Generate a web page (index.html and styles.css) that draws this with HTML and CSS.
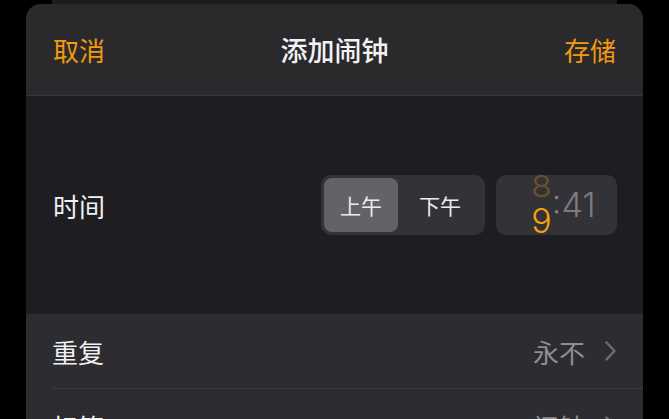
FILE: index.html
```html
<!DOCTYPE html>
<html lang="zh-CN">
<head>
<meta charset="UTF-8">
<meta name="viewport" content="width=device-width, initial-scale=1.0">
<title>添加闹钟</title>
<link rel="stylesheet" href="styles.css">
</head>
<body>
  <div class="behind"></div>
  <div class="sheet">
    <div class="header">
      <span class="action">取消</span>
      <span class="title">添加闹钟</span>
      <span class="action">存储</span>
    </div>

    <div class="time-section">
      <span class="label">时间</span>
      <div class="pickers">
        <div class="segment">
          <span class="seg selected">上午</span>
          <span class="seg">下午</span>
        </div>
        <div class="clock">
          <div class="hour">
            <span class="hour-prev">8</span>
            <span class="hour-now">9</span>
          </div>
          <span class="minute">:41</span>
        </div>
      </div>
    </div>

    <div class="list">
      <div class="row">
        <span class="label">重复</span>
        <span class="value">永不
          <svg class="chevron" width="11" height="20" viewBox="0 0 11 20"><polyline points="1.5,1.5 9.5,10 1.5,18.5" fill="none" stroke="#6c6b71" stroke-width="2.5" stroke-linecap="round" stroke-linejoin="round"/></svg>
        </span>
      </div>
      <div class="row">
        <span class="label">标签</span>
        <span class="value">闹钟
          <svg class="chevron" width="11" height="20" viewBox="0 0 11 20"><polyline points="1.5,1.5 9.5,10 1.5,18.5" fill="none" stroke="#6c6b71" stroke-width="2.5" stroke-linecap="round" stroke-linejoin="round"/></svg>
        </span>
      </div>
    </div>
  </div>
</body>
</html>
```

FILE: styles.css
```css
  body {
    font-family: "Noto Sans CJK SC", "Noto Sans", sans-serif;
    background-color: #000;
    margin: 0;
    padding: 0;
    height: 419px;
    overflow: hidden;
  }

  .behind {
    height: 4px;
    margin: 0 52px;
    background-color: #1c1c1e;
  }

  .sheet {
    margin: 0 26px;
    border-radius: 15px 15px 0 0;
    overflow: hidden;
    background-color: #1e1d22;
  }

  .header {
    height: 91px;
    padding: 0 27px;
    display: flex;
    justify-content: space-between;
    align-items: center;
    background-color: #2a2a2c;
    border-bottom: 1px solid #38373c;
  }

  .action {
    color: #f19a0e;
    font-size: 26px;
  }

  .title {
    color: #f2f2f4;
    font-size: 27px;
    font-weight: 500;
  }

  .label {
    color: #f0f0f2;
    font-size: 26px;
  }

  .time-section {
    height: 218px;
    padding: 0 26px 0 27px;
    display: flex;
    justify-content: space-between;
    align-items: center;
  }

  .pickers {
    display: flex;
    gap: 11px;
  }

  .segment {
    width: 164px;
    height: 60px;
    box-sizing: border-box;
    padding: 3px;
    border-radius: 10px;
    background-color: #333237;
    display: flex;
  }

  .seg {
    flex: 1;
    display: flex;
    justify-content: center;
    align-items: center;
    color: #ececee;
    font-size: 21px;
    border-radius: 8px;
  }

  .seg.selected {
    flex: 0 0 74px;
    background-color: #636267;
  }

  .clock {
    width: 121px;
    height: 60px;
    box-sizing: border-box;
    padding-left: 35px;
    border-radius: 10px;
    background-color: #333237;
    display: flex;
    align-items: flex-start;
    font-family: Inter, "Liberation Sans", sans-serif;
    font-weight: 300;
    font-size: 34px;
  }

  .hour {
    display: flex;
    flex-direction: column;
    align-items: center;
  }

  .hour-prev {
    color: #6d5228;
    line-height: 34px;
    margin-top: -6px;
    transform: scaleY(0.88);
  }

  .hour-now {
    color: #f5a40e;
    line-height: 34px;
    margin-top: 1px;
  }

  .minute {
    color: #7c7b80;
    line-height: 34px;
    margin-top: 13px;
  }

  .list {
    background-color: #2d2c31;
    padding-left: 26px;
  }

  .row {
    height: 74px;
    padding-right: 27px;
    display: flex;
    justify-content: space-between;
    align-items: center;
    border-bottom: 1px solid #3c3b40;
  }

  .value {
    color: #8e8d92;
    font-size: 26px;
    display: flex;
    align-items: center;
    gap: 20px;
  }
```
